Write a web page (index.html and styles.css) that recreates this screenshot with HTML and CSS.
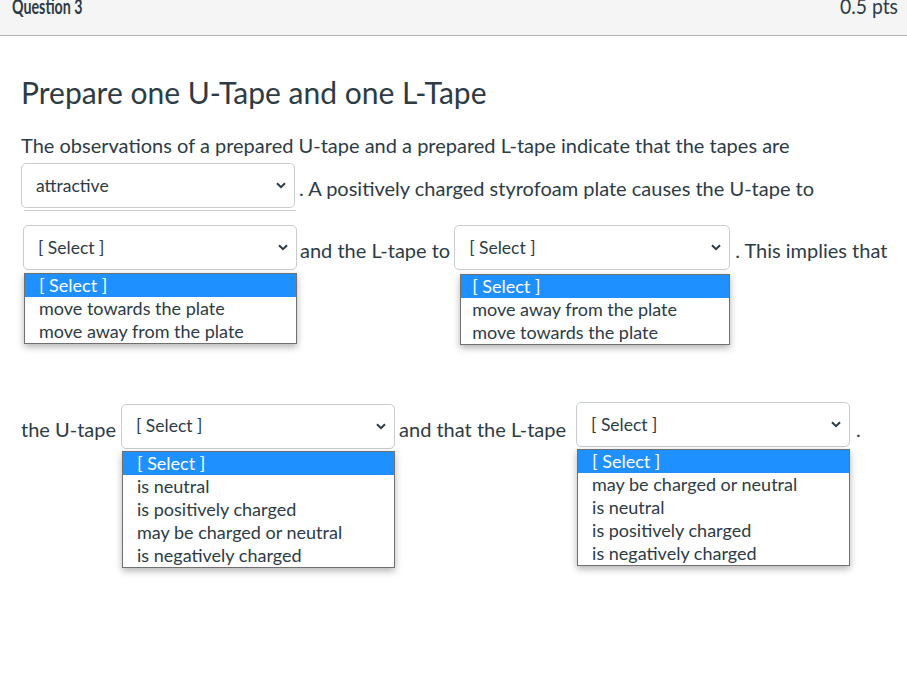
FILE: index.html
```html
<!DOCTYPE html>
<html lang="en">
<head>
    <meta charset="UTF-8">
    <meta name="viewport" content="width=device-width, initial-scale=1.0">
    <title>Question 3</title>
    <link rel="stylesheet" href="styles.css">
</head>
<body>
    <div class="question-header">
        <span class="question-name">Question 3</span>
        <span class="question-points">0.5 pts</span>
    </div>

    <div class="question-body">
        <h2 class="question-title">Prepare one U-Tape and one L-Tape</h2>

        <div class="question-text">
            <div class="row first">The observations of a prepared U-tape and a prepared L-tape indicate that the tapes are</div>

            <div class="row second">
                <div class="dropdown ruled">
                    <div class="select">
                        <span>attractive</span>
                        <svg class="chevron" width="10" height="7" viewBox="0 0 10 7"><polyline points="1,1.2 5,5.2 9,1.2" /></svg>
                    </div>
                </div>
                <span class="txt">. A positively charged styrofoam plate causes the U-tape to</span>
            </div>

            <div class="row third">
                <div class="dropdown nudge">
                    <div class="select">
                        <span>[ Select ]</span>
                        <svg class="chevron" width="10" height="7" viewBox="0 0 10 7"><polyline points="1,1.2 5,5.2 9,1.2" /></svg>
                    </div>
                    <ul class="options">
                        <li class="active">[ Select ]</li>
                        <li>move towards the plate</li>
                        <li>move away from the plate</li>
                    </ul>
                </div>
                <span class="txt">and the L-tape to</span>
                <div class="dropdown wide">
                    <div class="select">
                        <span>[ Select ]</span>
                        <svg class="chevron" width="10" height="7" viewBox="0 0 10 7"><polyline points="1,1.2 5,5.2 9,1.2" /></svg>
                    </div>
                    <ul class="options narrow">
                        <li class="active">[ Select ]</li>
                        <li>move away from the plate</li>
                        <li>move towards the plate</li>
                    </ul>
                </div>
                <span class="txt">. This implies that</span>
            </div>

            <div class="row fourth">
                <span class="txt">the U-tape</span>
                <div class="dropdown">
                    <div class="select">
                        <span>[ Select ]</span>
                        <svg class="chevron" width="10" height="7" viewBox="0 0 10 7"><polyline points="1,1.2 5,5.2 9,1.2" /></svg>
                    </div>
                    <ul class="options">
                        <li class="active">[ Select ]</li>
                        <li>is neutral</li>
                        <li>is positively charged</li>
                        <li>may be charged or neutral</li>
                        <li>is negatively charged</li>
                    </ul>
                </div>
                <span class="txt">and that the L-tape</span>
                <div class="dropdown raised">
                    <div class="select">
                        <span>[ Select ]</span>
                        <svg class="chevron" width="10" height="7" viewBox="0 0 10 7"><polyline points="1,1.2 5,5.2 9,1.2" /></svg>
                    </div>
                    <ul class="options">
                        <li class="active">[ Select ]</li>
                        <li>may be charged or neutral</li>
                        <li>is neutral</li>
                        <li>is positively charged</li>
                        <li>is negatively charged</li>
                    </ul>
                </div>
                <span class="txt">.</span>
            </div>
        </div>
    </div>
</body>
</html>
```

FILE: styles.css
```css
body {
    margin: 0;
    min-height: 100vh;
    background-color: white;
    color: #2d3b45;
    font-family: Lato, 'Noto Sans', sans-serif;
}

.question-header {
    display: flex;
    justify-content: space-between;
    align-items: flex-start;
    height: 35px;
    padding: 0 9px 0 12px;
    background-color: #f5f5f5;
    border-bottom: 1px solid #b3b8bb;
    overflow: hidden;
}

.question-name,
.question-points {
    display: inline-block;
    margin-top: -5px;
    font-size: 21px;
    line-height: 22px;
    font-weight: 700;
    transform: scaleX(0.68);
    transform-origin: left top;
}

.question-points {
    font-weight: 400;
    transform: scaleX(0.92);
    transform-origin: right top;
}

.question-body {
    padding: 38px 20px 160px 21px;
}

.question-title {
    margin: 0;
    font-size: 30px;
    line-height: 36px;
    font-weight: 400;
}

.question-text {
    font-size: 20px;
    line-height: 30px;
}

.row {
    display: flex;
    align-items: center;
    gap: 4px;
    white-space: nowrap;
}

.row.first {
    margin-top: 20px;
}

.row.second {
    margin-top: 3px;
}

.row.third {
    margin-top: 17px;
}

.row.fourth {
    margin-top: 132px;
}

.txt {
    padding-top: 5px;
}

.row.third .txt:last-child {
    margin-left: 1px;
}

.row.fourth .txt:first-child {
    margin-right: 1px;
}

.row.fourth .raised {
    margin-left: 6px;
    margin-bottom: 3px;
}

.row.fourth .txt:last-child {
    margin-left: 2px;
}

.row.fourth .options {
    top: calc(100% + 2px);
}

.dropdown {
    position: relative;
    flex-shrink: 0;
}

.dropdown.nudge {
    margin-left: 2px;
    margin-right: -1px;
}

.dropdown.wide .select {
    width: 276px;
}

.dropdown.ruled::after {
    content: '';
    position: absolute;
    left: 3px;
    right: -1px;
    top: calc(100% + 2px);
    height: 1px;
    background-color: #c7cdd1;
}

.select {
    display: flex;
    align-items: center;
    justify-content: space-between;
    box-sizing: border-box;
    width: 274px;
    height: 45px;
    padding: 0 8px 0 14px;
    background-color: white;
    border: 1px solid #c7cdd1;
    border-radius: 5px;
    font-size: 17.5px;
    line-height: 20px;
}

.chevron polyline {
    fill: none;
    stroke: #2d3b45;
    stroke-width: 2;
}

.options {
    position: absolute;
    top: calc(100% + 3px);
    left: 1px;
    right: 0;
    z-index: 5;
    margin: 0;
    padding: 0;
    list-style: none;
    background-color: white;
    border: 1px solid #707070;
    box-shadow: 0 3px 7px rgba(0, 0, 0, 0.3);
}

.options.narrow {
    left: 6px;
    top: calc(100% + 4px);
}

.options li {
    height: 23px;
    padding-left: 14px;
    font-size: 18px;
    line-height: 23px;
    color: #2d3b45;
}

.options.narrow li {
    padding-left: 11px;
}

.options li.active {
    background-color: #1e90ff;
    color: white;
}
```
